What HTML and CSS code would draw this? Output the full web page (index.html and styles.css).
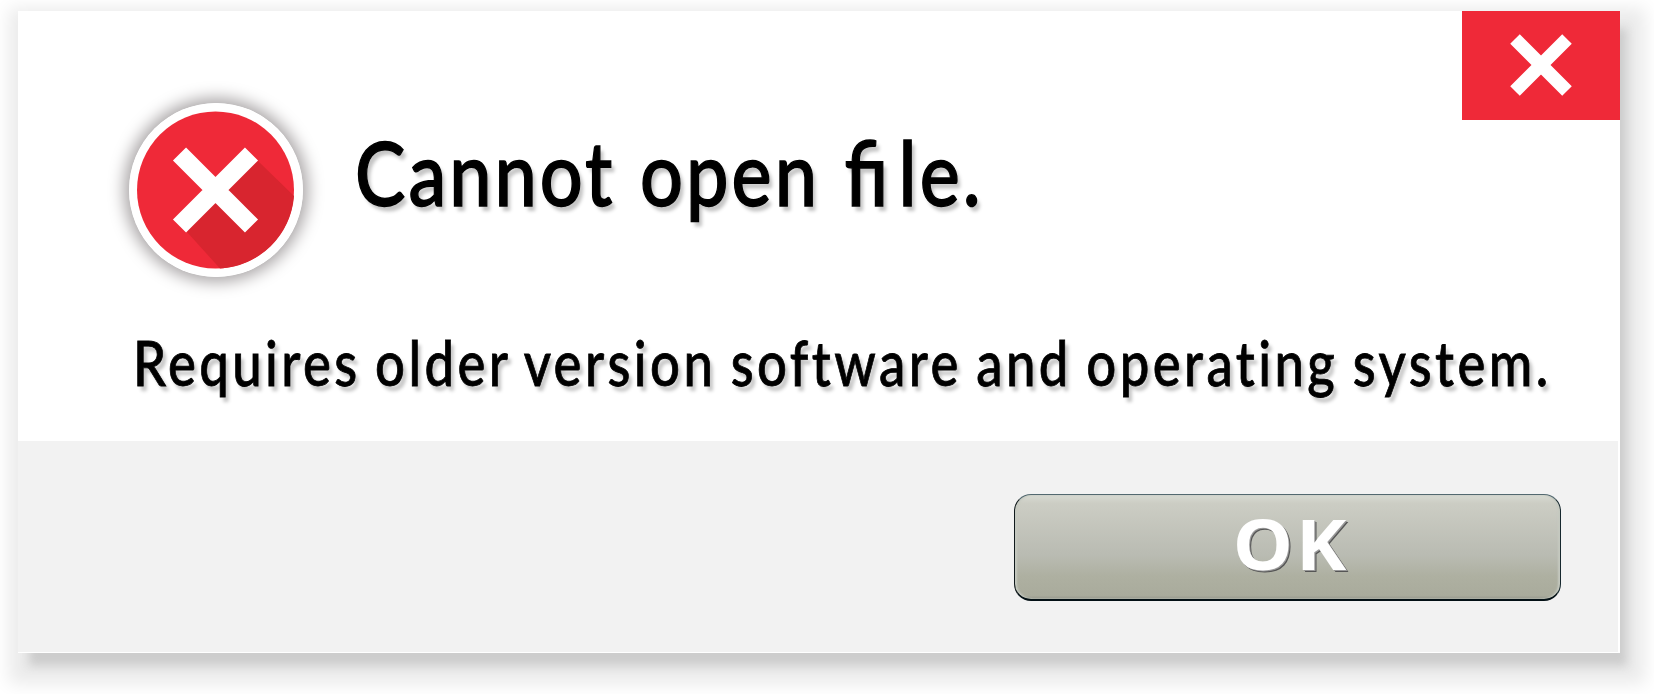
FILE: index.html
```
<!DOCTYPE html>
<html lang="en">
<head>
    <meta charset="UTF-8">
    <title>Cannot open file</title>

    <link rel="stylesheet" href="styles.css">
</head>
<body>

<div class="dialog">
    <div class="dialog__body">
        <button class="dialog__close" aria-label="Close">
            <svg class="dialog__cross" viewBox="0 0 62 62">
                <path d="M5 5L57 57M57 5L5 57" stroke="#fff" stroke-width="13.5"/>
            </svg>
        </button>
        <div class="dialog__header">
            <svg class="dialog__icon" viewBox="0 0 174 174">
                <circle cx="87" cy="87" r="87" fill="#fff"/>
                <circle cx="86.5" cy="87" r="78.5" fill="#ef2938"/>
                <path d="M129 58L165 93A78.5 78.5 0 0 1 91 165.5L58 129L86.5 87Z" fill="#d8252f"/>
                <path d="M50.5 51L122.5 123M122.5 51L50.5 123" stroke="#fff" stroke-width="18.5"/>
            </svg>
            <h1 class="dialog__title">Cannot open <span class="dialog__ligature">fi</span>le.</h1>
        </div>
        <p class="dialog__message">Requires older version software and operating system.</p>
    </div>
    <div class="dialog__footer">
        <button class="dialog__ok"><span class="dialog__ok__text">OK</span></button>
    </div>
</div>

</body>
</html>
```

FILE: styles.css
```
* {
    box-sizing: border-box;
    margin: 0;
    padding: 0;
}

body {
    background: #fff;
    font-family: "Open Sans", sans-serif;
    height: 694px;
    padding: 11px 34px 41px 18px;
    overflow: hidden;
}

.dialog {
    display: flex;
    flex-direction: column;
    height: 642px;
    background: #fff;
    box-shadow: 9px 15px 9px -2px #cdcdcd, 8px 14px 16px 17px #ebebeb;
}

.dialog__body {
    position: relative;
    height: 430px;
    padding: 92px 0 0 111px;
}
.dialog__close {
    position: absolute;
    top: 0;
    right: 0;
    width: 158px;
    height: 109px;
    background: #ef2938;
    border: none;
    padding: 2px 1px 0 0;
}
.dialog__cross {
    width: 62px;
    height: 62px;
}
.dialog__header {
    display: flex;
    height: 174px;
}
.dialog__icon {
    width: 174px;
    height: 174px;
    border-radius: 50%;
    box-shadow: 0 0 16px 5px #a9a5a6;
}
.dialog__title {
    margin: 9px 0 0 52px;
    font-family: Lato, sans-serif;
    font-size: 89px;
    font-weight: 500;
    line-height: 120px;
    letter-spacing: 3.5px;
    word-spacing: 3px;
    white-space: nowrap;
    color: #000;
    -webkit-text-stroke: 1.4px #000;
    text-shadow: 4px 5px 4px rgba(0, 0, 0, .23);
    transform: scaleX(.85);
    transform-origin: left;
}
.dialog__ligature {
    letter-spacing: 0;
    margin-right: 12px;
}
.dialog__message {
    margin: 45px 0 0 4px;
    font-family: Lato, sans-serif;
    font-size: 62px;
    font-weight: 500;
    line-height: 80px;
    letter-spacing: 4px;
    word-spacing: -2.6px;
    white-space: nowrap;
    color: #000;
    -webkit-text-stroke: .8px #000;
    text-shadow: 4px 5px 4px rgba(0, 0, 0, .23);
    transform: scaleX(.85);
    transform-origin: left;
}

.dialog__footer {
    display: flex;
    justify-content: flex-end;
    height: 211px;
    margin-right: 2px;
    padding: 53px 57px 0 0;
    background: #f2f2f2;
}
.dialog__ok {
    width: 547px;
    height: 107px;
    padding: 0 0 9px 8px;
    border: solid;
    border-width: 1px 1px 2px 1px;
    border-color: #536970 #16282e #031015 #10191b;
    border-radius: 17px;
    background: linear-gradient(#d8dbd3, #cccdc4 8%, #b9bbb2 58%, #aeb0a1 78%, #a9ab9c 97%, #8d9084);
    box-shadow: inset 2px 0 2px #c5c9c0, inset -2px 0 2px #c5c9c0;
    font-family: "Open Sans", sans-serif;
    font-size: 70px;
    font-weight: 700;
    line-height: 96px;
    letter-spacing: 3px;
    color: #fff;
    text-shadow: 1px 1px 0 #999, 2px 2px 0 #555;
}
.dialog__ok__text {
    display: inline-block;
    transform: scaleX(1.08);
}
```
